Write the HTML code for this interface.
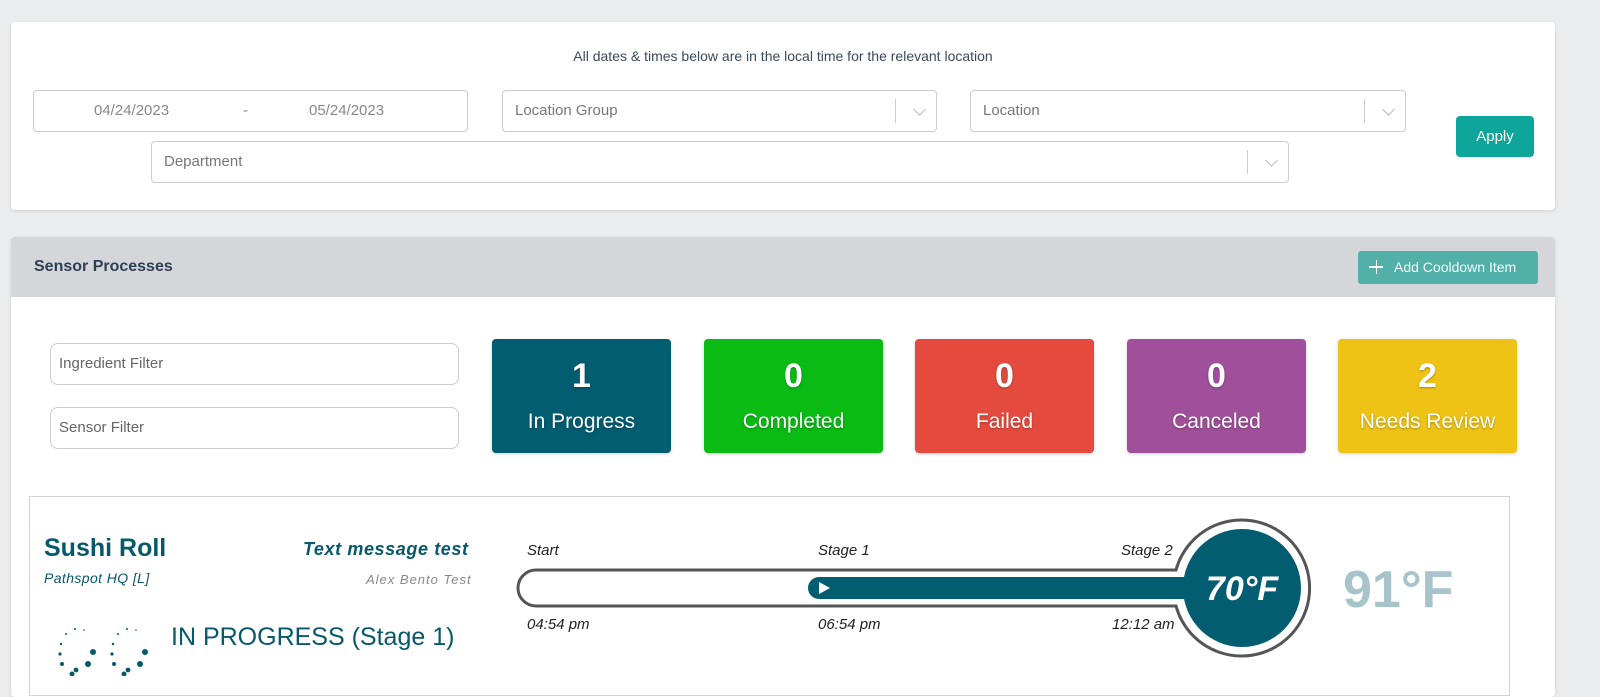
<!DOCTYPE html>
<html><head><style>
*{box-sizing:border-box;margin:0;padding:0}
body{width:1600px;height:676px;overflow:hidden;background:#ebecee;font-family:"Liberation Sans",sans-serif;position:relative;color:#333}
.abs{position:absolute}
.panel{background:#fff;border-radius:4px;box-shadow:0 1px 3px rgba(0,0,0,.12)}
.sel{position:absolute;height:42px;border:1px solid #ccc;border-radius:4px;background:#fff;font-size:15px;color:#777;padding:0 12px;line-height:40px}
.sel .sep{position:absolute;right:40px;top:8px;width:1px;height:24px;background:#ccc}
.sel .chev{position:absolute;right:12px;top:14px;width:9px;height:9px;border-right:1.5px solid #bbb;border-bottom:1.5px solid #bbb;transform:rotate(45deg)}
.inp{position:absolute;left:50px;width:409px;height:42px;border:1px solid #ccc;border-radius:8px;font-size:15px;color:#666;padding-left:8px;line-height:40px}
.tile{position:absolute;top:339px;width:179px;height:114px;border-radius:4px;color:#fff;text-align:center;box-shadow:0 1px 3px rgba(0,0,0,.2);text-shadow:0 1px 2px rgba(0,0,0,.3)}
.tile b{display:block;font-size:34px;margin-top:18px}
.tile span{display:block;font-size:21px;margin-top:14px}
.it{font-style:italic;font-size:15px;color:#222}
</style></head><body>
<div class="panel abs" style="left:11px;top:22px;width:1544px;height:188px"></div>
<div class="abs" style="left:0;width:1566px;top:48px;text-align:center;font-size:14px;color:#3a4a5a">All dates &amp; times below are in the local time for the relevant location</div>
<div class="sel" style="left:33px;top:90px;width:435px;color:#888"><span style="position:absolute;left:60px">04/24/2023</span><span style="position:absolute;left:209px">-</span><span style="position:absolute;left:275px">05/24/2023</span></div>
<div class="sel" style="left:502px;top:90px;width:435px">Location Group<div class="sep"></div><div class="chev"></div></div>
<div class="sel" style="left:970px;top:90px;width:436px">Location<div class="sep"></div><div class="chev"></div></div>
<div class="sel" style="left:151px;top:141px;width:1138px">Department<div class="sep"></div><div class="chev"></div></div>
<div class="abs" style="left:1456px;top:116px;width:78px;height:41px;background:#0ea69b;border-radius:4px;color:#fff;font-size:15px;text-align:center;line-height:41px">Apply</div>

<div class="panel abs" style="left:11px;top:237px;width:1544px;height:460px;overflow:hidden">
<div style="height:60px;background:#d5d6d9"></div>
</div>
<div class="abs" style="left:34px;top:258px;font-size:16px;font-weight:bold;color:#2e3f55">Sensor Processes</div>
<div class="abs" style="left:1358px;top:251px;width:180px;height:33px;background:#52b0a9;border-radius:3px;font-size:14px;line-height:33px;padding-left:36px;color:#f2fbfa">Add Cooldown Item</div>
<div class="abs" style="left:1369px;top:266px;width:14px;height:1.5px;background:#f2fbfa"></div>
<div class="abs" style="left:1375.5px;top:260px;width:1.5px;height:14px;background:#f2fbfa"></div>

<div class="inp" style="top:343px">Ingredient Filter</div>
<div class="inp" style="top:407px">Sensor Filter</div>
<div class="tile" style="left:492px;background:#035d70"><b>1</b><span>In Progress</span></div>
<div class="tile" style="left:704px;background:#0abb14"><b>0</b><span>Completed</span></div>
<div class="tile" style="left:915px;background:#e44b3e"><b>0</b><span>Failed</span></div>
<div class="tile" style="left:1127px;background:#a0509a"><b>0</b><span>Canceled</span></div>
<div class="tile" style="left:1338px;background:#eec316"><b>2</b><span>Needs Review</span></div>

<div class="abs" style="left:29px;top:496px;width:1481px;height:200px;border:1px solid #d4d4d4;background:#fff"></div>
<div class="abs" style="left:44px;top:534px;font-size:25px;font-weight:bold;color:#07586b">Sushi Roll</div>
<div class="abs" style="left:44px;top:570px;font-size:14px;font-style:italic;color:#07586b;letter-spacing:.4px">Pathspot HQ [L]</div>
<div class="abs" style="left:303px;top:539px;font-size:18px;font-weight:bold;font-style:italic;color:#07586b;letter-spacing:.6px">Text message test</div>
<div class="abs" style="left:366px;top:572px;font-size:13px;font-style:italic;color:#888;letter-spacing:1px">Alex Bento Test</div>
<svg class="abs" style="left:56px;top:624px" width="100" height="52">
<g fill="#07586b">
<circle cx="5" cy="20" r="1.2"/><circle cx="10" cy="10" r="1"/><circle cx="19" cy="5" r="1"/><circle cx="28" cy="6" r=".8"/><circle cx="4" cy="30" r="1.6"/><circle cx="6" cy="40" r="2"/><circle cx="20" cy="46" r="2.4"/><circle cx="32" cy="40" r="3"/><circle cx="37" cy="28" r="3"/><circle cx="16" cy="50" r="2.5"/>
<circle cx="57" cy="20" r="1.2"/><circle cx="62" cy="10" r="1"/><circle cx="71" cy="5" r="1"/><circle cx="80" cy="6" r=".8"/><circle cx="56" cy="30" r="1.6"/><circle cx="58" cy="40" r="2"/><circle cx="72" cy="46" r="2.4"/><circle cx="84" cy="40" r="3"/><circle cx="89" cy="28" r="3"/><circle cx="68" cy="50" r="2.5"/>
</g></svg>
<div class="abs" style="left:171px;top:623px;font-size:25px;color:#07586b">IN PROGRESS (Stage 1)</div>

<svg class="abs" style="left:500px;top:515px" width="820" height="161">
<path d="M36 55 H676 A68 68 0 1 1 676 91 H36 A18 18 0 0 1 36 55 Z" fill="#fff" stroke="#555" stroke-width="3"/>
<circle cx="742" cy="73" r="59" fill="#035d70"/>
<rect x="308" y="62" width="420" height="22" rx="11" fill="#035d70"/>
<path d="M319 67 L330 73 L319 79 Z" fill="#fff"/>
<text x="742" y="85" text-anchor="middle" font-family="Liberation Sans" font-size="34" font-weight="bold" font-style="italic" fill="#fff">70°F</text>
</svg>
<div class="abs it" style="left:527px;top:542px">Start</div>
<div class="abs it" style="left:818px;top:542px">Stage 1</div>
<div class="abs it" style="left:1121px;top:542px">Stage 2</div>
<div class="abs it" style="left:527px;top:616px">04:54 pm</div>
<div class="abs it" style="left:818px;top:616px">06:54 pm</div>
<div class="abs it" style="left:1112px;top:616px">12:12 am</div>
<div class="abs" style="left:1343px;top:560px;font-size:52px;font-weight:bold;color:#a8c4cb">91°F</div>
</body></html>
